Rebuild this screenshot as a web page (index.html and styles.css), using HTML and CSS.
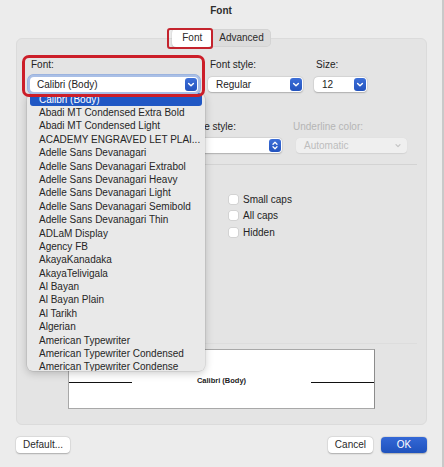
FILE: index.html
```html
<!DOCTYPE html>
<html>
<head>
<meta charset="utf-8">
<link rel="stylesheet" href="styles.css">
</head>
<body>
<div class="window">
  <div class="titlebar">Font</div>
  <div class="body">
    <div class="panel">
      <div class="tabs">
        <div class="tab active">Font</div>
        <div class="tab">Advanced</div>
      </div>

      <div class="row row1">
        <div class="field col-font">
          <div class="label">Font:</div>
          <div class="select focus"><span>Calibri (Body)</span>
            <span class="btn"><svg width="12" height="13" viewBox="0 0 12 13"><path d="M3.6 5.4 L6 7.8 L8.4 5.4" fill="none" stroke="#fff" stroke-width="1.4" stroke-linecap="round" stroke-linejoin="round"/></svg></span>
          </div>
        </div>
        <div class="field col-style">
          <div class="label">Font style:</div>
          <div class="select"><span>Regular</span>
            <span class="btn"><svg width="12" height="13" viewBox="0 0 12 13"><path d="M3.6 5.4 L6 7.8 L8.4 5.4" fill="none" stroke="#fff" stroke-width="1.4" stroke-linecap="round" stroke-linejoin="round"/></svg></span>
          </div>
        </div>
        <div class="field col-size">
          <div class="label">Size:</div>
          <div class="select"><span>12</span>
            <span class="btn"><svg width="12" height="13" viewBox="0 0 12 13"><path d="M3.6 5.4 L6 7.8 L8.4 5.4" fill="none" stroke="#fff" stroke-width="1.4" stroke-linecap="round" stroke-linejoin="round"/></svg></span>
          </div>
        </div>
      </div>

      <div class="row row2">
        <div class="field col-color">
          <div class="label covered">Font color:</div>
          <div class="select"><span class="covered">Automatic</span>
            <span class="btn covered"></span>
          </div>
        </div>
        <div class="field col-ustyle">
          <div class="label">Underline style:</div>
          <div class="select"><span class="covered">(none)</span>
            <span class="btn"><svg width="12" height="13" viewBox="0 0 12 13"><path d="M4 5.2 L6 3.2 L8 5.2 M4 7.8 L6 9.8 L8 7.8" fill="none" stroke="#fff" stroke-width="1.3" stroke-linecap="round" stroke-linejoin="round"/></svg></span>
          </div>
        </div>
        <div class="field col-ucolor disabled">
          <div class="label">Underline color:</div>
          <div class="select"><span>Automatic</span>
            <span class="gbtn"><svg width="12" height="13" viewBox="0 0 12 13"><path d="M4 5.6 L6 7.6 L8 5.6" fill="none" stroke="#c4c4c4" stroke-width="1.2" stroke-linecap="round" stroke-linejoin="round"/></svg></span>
          </div>
        </div>
      </div>

      <div class="sep"></div>

      <div class="effects">
        <div class="label covered">Effects:</div>
        <div class="checks">
          <div class="check covered"><span class="box"></span>Strikethrough</div>
          <div class="check"><span class="box"></span>Small caps</div>
          <div class="check covered"><span class="box"></span>Double strikethrough</div>
          <div class="check"><span class="box"></span>All caps</div>
          <div class="check covered"><span class="box"></span>Superscript</div>
          <div class="check"><span class="box"></span>Hidden</div>
          <div class="check covered"><span class="box"></span>Subscript</div>
        </div>
      </div>

      <div class="sep sep2"></div>

      <div class="preview-row">
        <div class="preview">
          <span class="pline"></span>
          <span class="ptext">Calibri (Body)</span>
          <span class="pline"></span>
        </div>
      </div>
    </div>

    <div class="footer">
      <div class="button">Default...</div>
      <div class="spacer"></div>
      <div class="button">Cancel</div>
      <div class="button ok">OK</div>
    </div>
  </div>

  <div class="list">
    <div class="item sel">Calibri (Body)</div>
    <div class="item">Abadi MT Condensed Extra Bold</div>
    <div class="item">Abadi MT Condensed Light</div>
    <div class="item">ACADEMY ENGRAVED LET PLAI...</div>
    <div class="item">Adelle Sans Devanagari</div>
    <div class="item">Adelle Sans Devanagari Extrabol</div>
    <div class="item">Adelle Sans Devanagari Heavy</div>
    <div class="item">Adelle Sans Devanagari Light</div>
    <div class="item">Adelle Sans Devanagari Semibold</div>
    <div class="item">Adelle Sans Devanagari Thin</div>
    <div class="item">ADLaM Display</div>
    <div class="item">Agency FB</div>
    <div class="item">AkayaKanadaka</div>
    <div class="item">AkayaTelivigala</div>
    <div class="item">Al Bayan</div>
    <div class="item">Al Bayan Plain</div>
    <div class="item">Al Tarikh</div>
    <div class="item">Algerian</div>
    <div class="item">American Typewriter</div>
    <div class="item">American Typewriter Condensed</div>
    <div class="item">American Typewriter Condense</div>
  </div>

  <div class="mark mark-tab"></div>
  <div class="mark mark-font"></div>
</div>
</body>
</html>
```

FILE: styles.css
```css
* { box-sizing: border-box; }

html, body {
  margin: 0;
  padding: 0;
  background: #f2f2f2;
}

body {
  font-family: "Liberation Sans", Arial, sans-serif;
  font-size: 10px;
  color: #232323;
}

.window {
  position: relative;
  width: 444px;
  height: 467px;
  background: #ececec;
  border-right: 2px solid #c9c9c9;
  display: flex;
  flex-direction: column;
  overflow: hidden;
}

.covered { visibility: hidden; }

.titlebar {
  height: 20px;
  display: flex;
  align-items: center;
  justify-content: center;
  font-weight: bold;
  color: #2e2e2e;
  padding-top: 1px;
}

.body {
  flex: 1;
  display: flex;
  flex-direction: column;
  padding: 0 15px 0 16px;
}

.panel {
  margin-top: 18px;
  height: 387px;
  width: 411px;
  background: #e4e4e4;
  border: 1px solid #dbdbdb;
  border-radius: 6px;
  padding: 0 9px 15px 13px;
  display: flex;
  flex-direction: column;
}

.tabs {
  align-self: center;
  margin-top: -10px;
  margin-left: -4px;
  height: 18px;
  display: flex;
  background: #dcdcdc;
  border-radius: 5px;
  box-shadow: inset 0 0 0 0.5px rgba(0,0,0,0.08);
}

.tab {
  height: 18px;
  line-height: 18px;
  padding: 0 7px;
  font-size: 10px;
  color: #2a2a2a;
}

.tab.active {
  background: #ffffff;
  border-radius: 4px;
  padding: 0 10px;
  box-shadow: 0 0.5px 1.5px rgba(0,0,0,0.25);
}

.row {
  display: flex;
}

.row1 {
  margin-top: 12px;
  gap: 10px;
}

.row2 {
  margin-top: 29px;
  gap: 10px;
}

.row2 .label { margin-bottom: 5px; }

.field {
  display: flex;
  flex-direction: column;
}

.label {
  height: 12px;
  line-height: 12px;
  padding-left: 1px;
  margin-bottom: 6px;
  white-space: nowrap;
}

.col-font { width: 168px; }
.col-style { width: 95px; }
.col-size { width: 53px; margin-left: 1px; }
.col-style .label, .col-size .label { padding-left: 2px; }

.col-color { width: 126px; }
.col-ustyle { width: 116px; }
.col-ucolor { width: 115px; }

.select {
  height: 15px;
  background: #ffffff;
  border-radius: 4px;
  box-shadow: 0 0.5px 1.5px rgba(0,0,0,0.22), 0 0 0 0.5px rgba(0,0,0,0.06);
  display: flex;
  align-items: center;
  justify-content: space-between;
  padding: 0 1px 0 8px;
  white-space: nowrap;
}

.select.focus {
  position: relative;
  z-index: 2;
  box-shadow: 0 0 0 2.5px #a9bfe6, 0 0 0 3px #8fa9d8;
  padding-left: 7px;
}

.btn {
  width: 12px;
  height: 13px;
  border-radius: 3px;
  background: linear-gradient(#3d6fd8, #2353be);
  display: flex;
}

.gbtn {
  width: 12px;
  height: 13px;
  display: flex;
  margin-right: 2px;
}

.disabled .label { color: #b5b5b5; }
.disabled .select {
  background: #efefef;
  color: #bdbdbd;
  box-shadow: 0 0.5px 1px rgba(0,0,0,0.08);
  margin-left: 4px;
}

.sep {
  margin-top: 11px;
  height: 1px;
  background: #d3d3d3;
}

.effects {
  margin-top: 8px;
}

.checks {
  display: grid;
  grid-template-columns: 199px 1fr;
}

.check {
  height: 16.5px;
  display: flex;
  align-items: center;
  gap: 5px;
}

.box {
  width: 9px;
  height: 9px;
  background: #ffffff;
  border-radius: 2px;
  box-shadow: 0 0 0 0.5px rgba(0,0,0,0.15);
}

.sep2 {
  margin-top: auto;
  margin-bottom: 5px;
  background: #dddddd;
}

.preview-row {
  display: flex;
  padding-left: 38px;
}

.preview {
  width: 307px;
  height: 60px;
  background: #ffffff;
  border: 1px solid #a8a8a8;
  border-right-color: #8c8c8c;
  display: flex;
  align-items: center;
  justify-content: space-between;
  padding-top: 3px;
}

.pline {
  width: 63px;
  height: 1px;
  background: #111;
  margin-top: 4px;
}

.ptext {
  font-size: 7.5px;
  font-weight: bold;
  color: #222;
}

.footer {
  margin-top: 12px;
  display: flex;
  gap: 8px;
  padding-right: 0;
}

.spacer { flex: 1; }

.button {
  height: 16px;
  line-height: 16px;
  padding: 0 7px;
  background: #ffffff;
  border-radius: 4px;
  box-shadow: 0 0.5px 1.5px rgba(0,0,0,0.25), 0 0 0 0.5px rgba(0,0,0,0.06);
  color: #2a2a2a;
}

.button.ok {
  width: 46px;
  text-align: center;
  background: linear-gradient(#3468d6, #1f52bd);
  color: #ffffff;
}

.list {
  position: absolute;
  left: 27px;
  top: 92.6px;
  width: 178px;
  height: 278px;
  background: #e9e9e9;
  border-radius: 6px;
  box-shadow: 0 2px 8px rgba(0,0,0,0.22), 0 0 0 0.5px rgba(0,0,0,0.12);
  padding: 0 3px;
  overflow: hidden;
  z-index: 1;
}

.item {
  height: 13.4px;
  line-height: 13.4px;
  padding-left: 9px;
  white-space: nowrap;
  overflow: hidden;
  color: #262626;
}

.item.sel {
  background: #2057c4;
  color: #ffffff;
  border-radius: 3px;
}

.mark {
  position: absolute;
  border: 2px solid #c4232d;
  z-index: 3;
}

.mark-tab {
  left: 167px;
  top: 28px;
  width: 46px;
  height: 21px;
  border-radius: 3px;
  border-width: 2px;
}

.mark-font {
  left: 22px;
  top: 55px;
  width: 183px;
  height: 42px;
  border-radius: 7px;
  border-width: 3.5px;
  border-color: #cc1e29;
}
```
